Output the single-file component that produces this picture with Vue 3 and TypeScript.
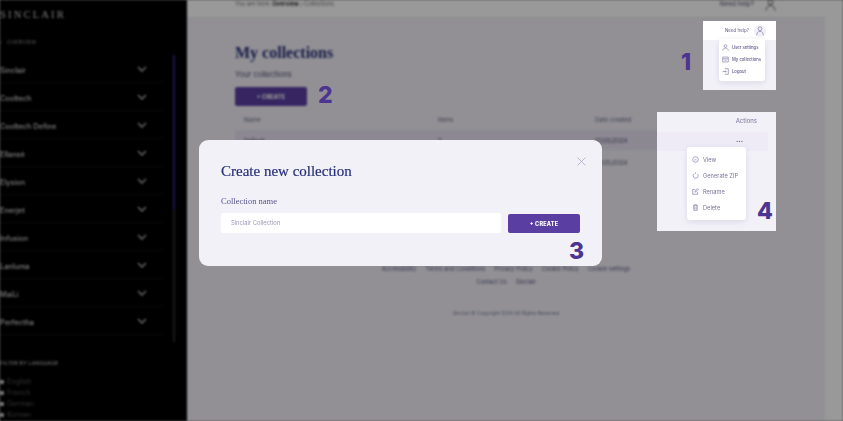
<template>
  <div class="screen">
    <div class="shell">
      <aside class="sidebar">
        <div class="logo">SINCLAIR</div>
        <div class="overview"><span class="back">‹</span> OVERVIEW</div>
        <div class="brand-wrap">
          <ul class="brands">
            <li v-for="b in brands" :key="b" class="brand">
              <span class="brand-name">{{ b }}</span>
              <svg width="10" height="6" viewBox="0 0 10 6"><path d="M1 1l4 4 4-4" fill="none" stroke="#bbb" stroke-width="1.4" /></svg>
            </li>
          </ul>
          <div class="side-scroll"><div class="side-thumb"></div></div>
        </div>
        <div class="filter-title">FILTER BY LANGUAGE</div>
        <ul class="langs">
          <li v-for="l in langs" :key="l"><i></i>{{ l }}</li>
        </ul>
      </aside>

      <div class="main">
        <div class="page">
          <header class="topbar">
            <div class="crumbs">You are here: <b>Overview</b> / Collections</div>
            <div class="top-right">
              <span>Need help?</span>
              <span class="avatar">
                <svg width="11" height="12" viewBox="0 0 12 13"><circle cx="6" cy="3.5" r="2.6" fill="none" stroke="#555" /><path d="M1 12.5c.4-3.4 2-5.4 5-5.4s4.6 2 5 5.4" fill="none" stroke="#555" /></svg>
              </span>
            </div>
          </header>
          <section class="content">
            <h1>My collections</h1>
            <div class="sub">Your collections</div>
            <button class="btn page-btn">+ CREATE</button>
            <div class="thead">
              <span>Name</span><span>Items</span><span>Date created</span>
            </div>
            <div class="trow shaded"><span>Default</span><span>2</span><span>17/05/2024</span></div>
            <div class="trow"><span></span><span></span><span>17/05/2024</span></div>
          </section>
          <footer class="foot">
            <div class="foot-links">
              <span>Accessibility</span><span>Terms and Conditions</span><span>Privacy Policy</span><span>Cookie Policy</span><span>Cookie settings</span>
            </div>
            <div class="foot-links"><span>Contact Us</span><span>Sinclair</span></div>
            <div class="copy">Sinclair © Copyright 2024 All Rights Reserved</div>
          </footer>
        </div>
        <div class="page-scroll"></div>
      </div>
    </div>

    <div class="dim"></div>

    <div class="modal">
      <svg class="close" width="9" height="9" viewBox="0 0 9 9"><path d="M.5.5l8 8M8.500.5l-8 8" stroke="#a9a7c4" stroke-width=".8" /></svg>
      <h2>Create new collection</h2>
      <label>Collection name</label>
      <div class="form-row">
        <div class="field">Sinclair Collection</div>
        <button class="btn">+ CREATE</button>
      </div>
    </div>

    <!-- annotation crops sitting over the dimmed page -->
    <div class="inset inset-user">
      <div class="inset-head">
        <span>Need help?</span>
        <span class="inset-avatar">
          <svg width="8" height="10" viewBox="0 0 12 14"><circle cx="6" cy="3.500" r="2.800" fill="none" stroke="#77759a" /><path d="M1 13.500c.4-3.800 2-6 5-6s4.600 2.200 5 6" fill="none" stroke="#77759a" /></svg>
        </span>
      </div>
      <div class="menu user-menu">
        <div v-for="m in userMenu" :key="m.label" class="menu-item">
          <svg width="7" height="7" viewBox="0 0 10 10"><path :d="m.icon" fill="none" stroke="#8583a6" stroke-width="1" /></svg>
          {{ m.label }}
        </div>
      </div>
    </div>

    <div class="inset inset-actions">
      <div class="inset-actions-head">Actions</div>
      <div class="inset-row">...</div>
      <div class="menu action-menu">
        <div v-for="m in actionMenu" :key="m.label" class="menu-item">
          <svg width="7" height="7" viewBox="0 0 10 10"><path :d="m.icon" fill="none" stroke="#8583a6" stroke-width="1" /></svg>
          {{ m.label }}
        </div>
      </div>
    </div>

    <span class="num n1">1</span>
    <span class="num n2">2</span>
    <span class="num n3">3</span>
    <span class="num n4">4</span>
  </div>
</template>

<script setup lang="ts">
const brands = ['Sinclair', 'Cooltech', 'Cooltech Define', 'Ellansé', 'Elysion', 'Enerjet', 'Infusion', 'Lanluma', 'MaiLi', 'Perfectha']
const langs = ['English', 'French', 'German', 'Korean']

const userMenu = [
  { label: 'User settings', icon: 'M5 1a2 2 0 1 1 0 4 2 2 0 0 1 0-4zM1 9.500c.3-2.500 1.800-3.500 4-3.500s3.700 1 4 3.500' },
  { label: 'My collections', icon: 'M1 1.500h8v7H1zM1 4h8M3.500 6h3' },
  { label: 'Logout', icon: 'M4 1h5v8H4M1 5h5M4.500 3.500L6 5 4.500 6.500' }
]
const actionMenu = [
  { label: 'View', icon: 'M5 1a4 4 0 1 1 0 8 4 4 0 0 1 0-8zM3.500 5.500h3' },
  { label: 'Generate ZIP', icon: 'M7.800 2.800A3.600 3.600 0 1 1 3 2.500M5 .5v2' },
  { label: 'Rename', icon: 'M8 5.500V9H1V2h3.500M4 6l.3-1.500L8 1l1 1-3.500 3.500z' },
  { label: 'Delete', icon: 'M1.500 2.500h7M3.500 2.500V1h3v1.500M2.500 2.500V9h5V2.500M4 4.500v3M6 4.500v3' }
]
</script>

<style>
html,
body {
  margin: 0;
  background: #919092;
}
</style>

<style scoped>
.screen {
  position: relative;
  width: 843px;
  height: 421px;
  overflow: hidden;
  font-family: Inter, "Open Sans", sans-serif;
}

.shell {
  display: flex;
  width: 843px;
  height: 421px;
  filter: blur(1.1px);
}

.sidebar {
  width: 187px;
  flex: none;
  background: #000;
  color: #aaa;
  overflow: hidden;
  display: flex;
  flex-direction: column;
}

.logo {
  font-family: "Liberation Serif", serif;
  font-size: 10.5px;
  letter-spacing: 2.2px;
  color: #ccc;
  padding-top: 9px;
  line-height: 12px;
}

.overview {
  font-size: 5.2px;
  letter-spacing: 0.3px;
  color: #999;
  margin-top: 17px;
  line-height: 8px;
}

.back {
  margin-right: 3px;
}

.brand-wrap {
  display: flex;
  margin-top: 9px;
}

.brands {
  list-style: none;
  margin: 0;
  padding: 0;
  width: 163px;
}

.brand {
  height: 28px;
  box-sizing: border-box;
  border-bottom: 1px solid #131313;
  padding-right: 16px;
  display: flex;
  align-items: center;
  justify-content: space-between;
  font-size: 7.3px;
  font-weight: 500;
  color: #d0d0d0;
}

.brand-name {
  margin-top: 3px;
}

.side-scroll {
  width: 2px;
  height: 287px;
  margin-left: 10px;
  background: #2c2c2c;
}

.side-thumb {
  height: 155px;
  background: #30277a;
}

.filter-title {
  font-size: 5px;
  font-weight: 500;
  letter-spacing: 0.3px;
  color: #bbb;
  margin-top: 18px;
  line-height: 6px;
}

.langs {
  list-style: none;
  margin: 10px 0 0;
  padding: 0;
  font-size: 7.2px;
  color: #555;
}

.langs li {
  display: flex;
  align-items: center;
  gap: 3px;
  height: 11px;
}

.langs i {
  width: 4px;
  height: 4px;
  border-radius: 1px;
  background: #ccc;
}

.main {
  flex: 1;
  display: flex;
  min-width: 0;
}

.page {
  flex: 1;
  min-width: 0;
  background: #f3f1f8;
  display: flex;
  flex-direction: column;
}

.page-scroll {
  width: 18px;
  background: #ffffff;
}

.topbar {
  height: 18px;
  flex: none;
  background: #fff;
  border-bottom: 1px solid #e8e6ef;
  box-sizing: border-box;
  display: flex;
  justify-content: space-between;
  padding: 0 49px 0 48px;
  font-size: 5.7px;
  color: #777;
  line-height: 8px;
}

.crumbs b {
  color: #333;
}

.top-right {
  display: flex;
  gap: 11px;
  color: #55536f;
  font-size: 6.4px;
}

.avatar {
  margin-top: -1px;
}

.content {
  padding: 25px 0 0 48px;
  height: 244px;
  box-sizing: border-box;
  overflow: hidden;
}

h1 {
  margin: 0;
  font-family: "Liberation Serif", serif;
  font-size: 16px;
  font-weight: 700;
  line-height: 20px;
  color: #29307a;
}

.sub {
  margin-top: 7px;
  font-size: 7.5px;
  line-height: 10px;
  color: #4a4870;
}

.btn {
  width: 72px;
  height: 19px;
  border: 0;
  padding: 0;
  border-radius: 2px;
  background: #5a3ea1;
  color: #fff;
  font-family: Inter, sans-serif;
  font-size: 5.500px;
  font-weight: 800;
  letter-spacing: 0.2px;
  display: block;
}

.page-btn {
  margin-top: 7px;
}

.thead,
.trow {
  display: grid;
  grid-template-columns: 194px 157px 150px;
  padding-left: 9px;
  font-size: 6px;
  align-items: center;
  width: 533px;
  box-sizing: border-box;
}

.thead {
  height: 21px;
  margin-top: 3px;
  color: #6c6a90;
}

.trow {
  height: 20px;
  margin-bottom: 2px;
  color: #55536f;
  border-radius: 3px;
}

.shaded {
  background: #e8e3f4;
}

.foot {
  text-align: center;
  font-size: 5.8px;
  color: #5d5a85;
}

.foot-links {
  display: flex;
  justify-content: center;
  gap: 9px;
  height: 13px;
  align-items: center;
}

.copy {
  margin-top: 22px;
  font-size: 4.900px;
  color: #8280a0;
}

.dim {
  position: absolute;
  inset: 0;
  background: rgba(0, 0, 0, 0.4);
}

.modal {
  position: absolute;
  left: 199px;
  top: 140px;
  width: 403px;
  height: 126px;
  box-sizing: border-box;
  padding: 22px 22px 0;
  background: #f3f1f8;
  border-radius: 9px;
  filter: blur(0.3px);
}

.close {
  position: absolute;
  left: 378px;
  top: 17px;
}

h2 {
  margin: 0;
  font-family: "Liberation Serif", serif;
  font-size: 15px;
  font-weight: 400;
  line-height: 18px;
  -webkit-text-stroke: 0.2px #29307a;
  color: #29307a;
}

label {
  display: block;
  margin-top: 16px;
  font-family: "Liberation Serif", serif;
  font-size: 8.5px;
  line-height: 11px;
  color: #55548a;
}

.form-row {
  display: flex;
  align-items: flex-end;
  gap: 7px;
  margin-top: 6px;
}

.field {
  width: 280px;
  height: 20px;
  box-sizing: border-box;
  background: #fff;
  border-radius: 2px;
  padding-left: 10px;
  font-size: 5.800px;
  line-height: 19px;
  color: #9a98b8;
}

.inset {
  position: absolute;
  background: #f3f1f8;
  filter: blur(0.3px);
  font-size: 5px;
  color: #5d5a85;
}

.inset-user {
  left: 703px;
  top: 21px;
  width: 73px;
  height: 69px;
}

.inset-head {
  height: 19px;
  background: #fff;
  display: flex;
  justify-content: flex-end;
  align-items: center;
  gap: 5px;
  padding-right: 10px;
  font-size: 4.500px;
}

.inset-avatar {
  width: 12px;
  height: 12px;
  border-radius: 50%;
  background: #f3f1f8;
  display: flex;
  align-items: center;
  justify-content: center;
}

.menu {
  position: absolute;
  background: #fff;
  border-radius: 3px;
  box-shadow: 0 2px 6px rgba(60, 50, 110, 0.12);
  box-sizing: border-box;
  display: flex;
  flex-direction: column;
}

.menu-item {
  display: flex;
  align-items: center;
  gap: 3px;
  white-space: nowrap;
}

.user-menu {
  left: 16px;
  top: 18px;
  width: 46px;
  height: 42px;
  padding: 2px 0 0 3px;
  font-size: 4.200px;
  font-weight: 500;
}

.user-menu .menu-item {
  height: 12px;
}

.inset-actions {
  left: 657px;
  top: 112px;
  width: 119px;
  height: 119px;
}

.inset-actions-head {
  text-align: right;
  padding: 5px 19px 0 0;
  font-size: 6px;
  line-height: 8px;
  color: #77759a;
}

.inset-row {
  position: absolute;
  left: 0;
  top: 20px;
  width: 111px;
  height: 19px;
  background: #eeebf7;
  border-radius: 0 3px 3px 0;
  text-align: right;
  box-sizing: border-box;
  padding-right: 25px;
  font-size: 7px;
  font-weight: 700;
  line-height: 16px;
}

.action-menu {
  left: 30px;
  top: 35px;
  width: 59px;
  height: 73px;
  padding: 4px 0 0 5px;
  font-size: 5.700px;
  color: #77759a;
}

.action-menu .menu-item {
  height: 16px;
  gap: 4px;
}

.num {
  position: absolute;
  font-family: Inter, sans-serif;
  font-size: 23px;
  font-weight: 800;
  line-height: 24px;
  color: #4b3591;
}

.n1 { left: 681px; top: 50px; }
.n2 { left: 318px; top: 83px; }
.n3 { left: 569px; top: 239px; }
.n4 { left: 757px; top: 199px; }
</style>
